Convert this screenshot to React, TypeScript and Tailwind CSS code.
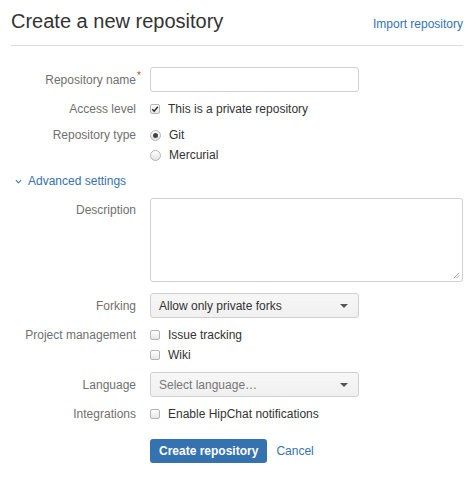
import type { ReactNode } from "react";

function Label({ children, required = false }: { children: ReactNode; required?: boolean }) {
  return (
    <div className="relative w-[125px] shrink-0 text-right text-[#707070]">
      {children}
      {required ? <span className="absolute -right-[5px] -top-[4px] text-[10px] text-[#d04437]">*</span> : null}
    </div>
  );
}

function Checkbox({ checked = false }: { checked?: boolean }) {
  return (
    <span className="flex h-[10px] w-[10px] shrink-0 items-center justify-center rounded-[2px] border border-[#b5b5b5] bg-gradient-to-b from-[#ffffff] to-[#e6e6e6]">
      {checked ? (
        <svg viewBox="0 0 10 10" className="h-[8px] w-[8px]">
          <path d="M1.5 5.2 L4 7.6 L8.6 2.2" fill="none" stroke="#333" strokeWidth="1.8" />
        </svg>
      ) : null}
    </span>
  );
}

function Radio({ checked = false }: { checked?: boolean }) {
  return (
    <span className="flex h-[11px] w-[11px] shrink-0 items-center justify-center rounded-full border border-[#b5b5b5] bg-gradient-to-b from-[#ffffff] to-[#e3e3e3]">
      {checked ? <span className="h-[5px] w-[5px] rounded-full bg-[#444]" /> : null}
    </span>
  );
}

function Option({ children, control }: { children: ReactNode; control: ReactNode }) {
  return (
    <div className="flex items-center gap-[8px] text-[#333]">
      {control}
      <span>{children}</span>
    </div>
  );
}

function Select({ value, placeholder = false }: { value: string; placeholder?: boolean }) {
  return (
    <div className="flex h-[25px] w-[209px] items-center justify-between rounded-[3px] border border-[#d0d0d0] bg-gradient-to-b from-[#f7f7f7] to-[#f0f0f0] pl-[8px] pr-[10px]">
      <span className={placeholder ? "text-[#777]" : "text-[#333]"}>{value}</span>
      <svg viewBox="0 0 8 4" className="h-[4px] w-[8px]">
        <path d="M0 0 H8 L4 4 Z" fill="#555" />
      </svg>
    </div>
  );
}

export default function App() {
  return (
    <div className="min-h-screen bg-white px-[11px] font-['Liberation_Sans',Arial,sans-serif] text-[12px] leading-[20px]">
      <div className="flex items-baseline justify-between border-b border-[#dcdcdc] pb-[11px] pt-[9px]">
        <h1 className="text-[20px] leading-[24px] font-normal text-[#333]">Create a new repository</h1>
        <a className="text-[12px] text-[#3572b0]">Import repository</a>
      </div>

      <form className="flex flex-col">
        <div className="mt-[21px] flex items-center gap-[14px]">
          <Label required>Repository name</Label>
          <div className="h-[25px] w-[209px] rounded-[3px] border border-[#d0d0d0] bg-white" />
        </div>

        <div className="mt-[7px] flex items-center gap-[14px]">
          <Label>Access level</Label>
          <Option control={<Checkbox checked />}>This is a private repository</Option>
        </div>

        <div className="mt-[6px] flex items-start gap-[14px]">
          <Label>Repository type</Label>
          <div className="flex flex-col">
            <Option control={<Radio checked />}>Git</Option>
            <Option control={<Radio />}>Mercurial</Option>
          </div>
        </div>

        <div className="mt-[6px] flex items-center gap-[6px] pl-[4px] text-[#3572b0]">
          <svg viewBox="0 0 8 5" className="h-[5px] w-[7px]">
            <path d="M1 1 L4 4 L7 1" fill="none" stroke="#3572b0" strokeWidth="1.2" />
          </svg>
          <span>Advanced settings</span>
        </div>

        <div className="mt-[7px] flex items-start gap-[14px]">
          <div className="pt-[2px]">
            <Label>Description</Label>
          </div>
          <div className="relative h-[84px] w-[313px] rounded-[3px] border border-[#d0d0d0] bg-white">
            <svg viewBox="0 0 8 8" className="absolute bottom-[2px] right-[2px] h-[7px] w-[7px]">
              <path d="M7 1 L1 7 M7 4 L4 7" stroke="#999" strokeWidth="1" />
            </svg>
          </div>
        </div>

        <div className="mt-[11px] flex items-center gap-[14px]">
          <Label>Forking</Label>
          <Select value="Allow only private forks" />
        </div>

        <div className="mt-[7px] flex items-start gap-[14px]">
          <Label>Project management</Label>
          <div className="flex flex-col">
            <Option control={<Checkbox />}>Issue tracking</Option>
            <Option control={<Checkbox />}>Wiki</Option>
          </div>
        </div>

        <div className="mt-[7px] flex items-center gap-[14px]">
          <Label>Language</Label>
          <Select value="Select language…" placeholder />
        </div>

        <div className="mt-[7px] flex items-center gap-[14px]">
          <Label>Integrations</Label>
          <Option control={<Checkbox />}>Enable HipChat notifications</Option>
        </div>

        <div className="mt-[15px] flex items-center gap-[9px] pl-[139px]">
          <button
            type="button"
            className="h-[24px] rounded-[3px] bg-[#3572b0] px-[9px] font-bold text-white"
          >
            Create repository
          </button>
          <a className="text-[#3572b0]">Cancel</a>
        </div>
      </form>
    </div>
  );
}
